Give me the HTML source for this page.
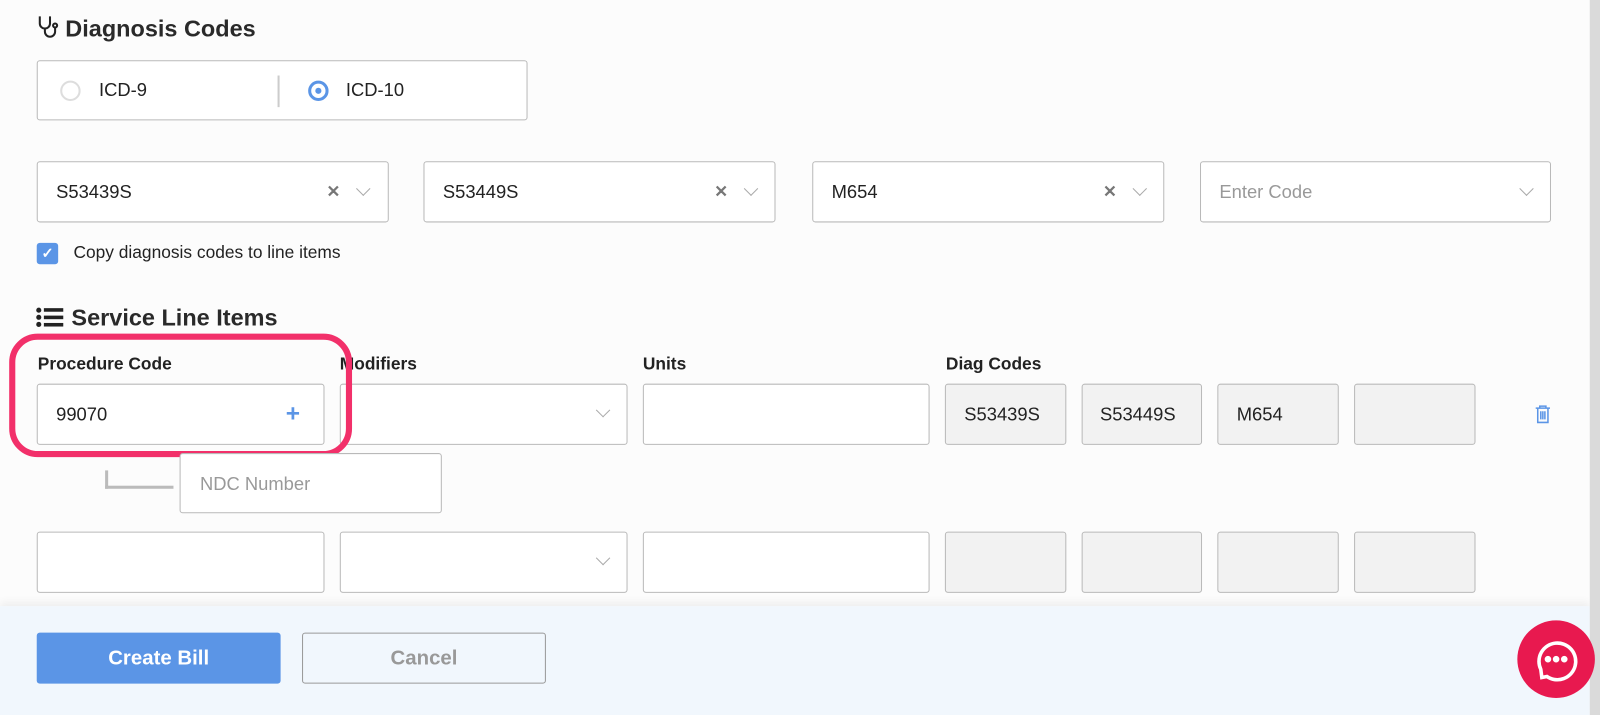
<!DOCTYPE html>
<html><head><style>
*{box-sizing:border-box;margin:0;padding:0}
body{width:1600px;height:701px;overflow:hidden;background:#fcfcfc;font-family:"Liberation Sans",sans-serif;color:#222;position:relative}
#w{position:absolute;left:0;top:0;width:1568px;height:687px;transform:scale(1.0204);transform-origin:0 0}
.a{position:absolute}
.box{position:absolute;border:1px solid #b9b9b9;border-radius:3px;background:#fff;height:60px}
.g{background:#f2f2f2}
.t{position:absolute;font-size:18px}
h2{position:absolute;font-size:23px;font-weight:bold;color:#2a2a2a}
.lbl{position:absolute;font-size:17px;font-weight:bold;color:#222}
.chev{position:absolute;width:10px;height:10px;border-right:1.5px solid #aaa;border-bottom:1.5px solid #aaa;transform:rotate(45deg)}
.x{position:absolute;font-size:16px;color:#777;font-weight:bold}
</style></head><body><div id="w">
<svg class="a" style="left:36px;top:14px" width="22" height="24" viewBox="0 0 22 24" fill="none" stroke="#222" stroke-width="2"><path d="M3 2v7a5 5 0 0 0 10 0V2M8 14v3a5 5 0 0 0 10 0v-4"/><circle cx="18" cy="11" r="2"/></svg>
<h2 style="left:64px;top:15px">Diagnosis Codes</h2>
<div class="box" style="left:36px;top:59px;width:481px;height:59px"></div>
<div class="a" style="left:272px;top:74px;width:2px;height:31px;background:#ccc"></div>
<div class="a" style="left:59px;top:79px;width:20px;height:20px;border:2px solid #ddd;border-radius:50%"></div>
<div class="t" style="left:97px;top:78px">ICD-9</div>
<div class="a" style="left:302px;top:79px;width:20px;height:20px;border:3px solid #5b95e6;border-radius:50%"><div class="a" style="left:4px;top:4px;width:6px;height:6px;background:#5b95e6;border-radius:50%"></div></div>
<div class="t" style="left:339px;top:78px">ICD-10</div>

<div class="box" style="left:36px;top:158px;width:345px"></div><div class="t" style="left:55px;top:178px">S53439S</div><div class="x" style="left:320px;top:178px">✕</div><div class="chev" style="left:351px;top:180px"></div>
<div class="box" style="left:415px;top:158px;width:345px"></div><div class="t" style="left:434px;top:178px">S53449S</div><div class="x" style="left:700px;top:178px">✕</div><div class="chev" style="left:731px;top:180px"></div>
<div class="box" style="left:796px;top:158px;width:345px"></div><div class="t" style="left:815px;top:178px">M654</div><div class="x" style="left:1081px;top:178px">✕</div><div class="chev" style="left:1112px;top:180px"></div>
<div class="box" style="left:1176px;top:158px;width:344px"></div><div class="t" style="left:1195px;top:178px;color:#999">Enter Code</div><div class="chev" style="left:1491px;top:180px"></div>

<div class="a" style="left:36px;top:238px;width:21px;height:21px;background:#5b95e6;border-radius:3px;color:#fff;font-size:14px;text-align:center;line-height:21px;font-weight:bold">✓</div>
<div class="t" style="left:72px;top:238px;font-size:17px">Copy diagnosis codes to line items</div>

<svg class="a" style="left:35px;top:301px" width="28" height="20" viewBox="0 0 28 20" fill="#222"><circle cx="3" cy="3" r="2.5"/><circle cx="3" cy="10" r="2.5"/><circle cx="3" cy="17" r="2.5"/><rect x="8" y="1" width="19" height="3.5"/><rect x="8" y="8.3" width="19" height="3.5"/><rect x="8" y="15.5" width="19" height="3.5"/></svg>
<h2 style="left:70px;top:298px">Service Line Items</h2>

<div class="lbl" style="left:37px;top:347px">Procedure Code</div>
<div class="lbl" style="left:333px;top:347px">Modifiers</div>
<div class="lbl" style="left:630px;top:347px">Units</div>
<div class="lbl" style="left:927px;top:347px">Diag Codes</div>

<div class="box" style="left:333px;top:376px;width:282px"></div><div class="chev" style="left:586px;top:397px"></div>
<div class="box" style="left:36px;top:376px;width:282px"></div><div class="t" style="left:55px;top:396px">99070</div>
<div class="a" style="left:280px;top:396px;color:#5b95e6;font-size:24px;font-weight:bold;line-height:20px">+</div>
<div class="a" style="left:9px;top:327px;width:336px;height:121px;border:6px solid #f2306a;border-radius:28px"></div>
<div class="box" style="left:630px;top:376px;width:281px"></div>
<div class="box g" style="left:926px;top:376px;width:119px"></div><div class="t" style="left:945px;top:396px;width:96px;overflow:hidden;white-space:nowrap">S53439S</div>
<div class="box g" style="left:1060px;top:376px;width:118px"></div><div class="t" style="left:1078px;top:396px;width:96px;overflow:hidden;white-space:nowrap">S53449S</div>
<div class="box g" style="left:1193px;top:376px;width:119px"></div><div class="t" style="left:1212px;top:396px">M654</div>
<div class="box g" style="left:1327px;top:376px;width:119px"></div>
<svg class="a" style="left:1504px;top:397px" width="16" height="18" viewBox="0 0 16 18" fill="none" stroke="#5b95e6" stroke-width="1.5"><path d="M1 3h14M5 3V1h6v2M3 3v14h10V3M6 6v8M8 6v8M10 6v8"/></svg>

<div class="a" style="left:103px;top:461px;width:3px;height:18px;background:#bbb"></div>
<div class="a" style="left:103px;top:476px;width:67px;height:3px;background:#bbb"></div>
<div class="box" style="left:176px;top:444px;width:257px;height:59px"></div><div class="t" style="left:196px;top:464px;color:#999">NDC Number</div>

<div class="box" style="left:36px;top:521px;width:282px"></div>
<div class="box" style="left:333px;top:521px;width:282px"></div><div class="chev" style="left:586px;top:542px"></div>
<div class="box" style="left:630px;top:521px;width:281px"></div>
<div class="box g" style="left:926px;top:521px;width:119px"></div>
<div class="box g" style="left:1060px;top:521px;width:118px"></div>
<div class="box g" style="left:1193px;top:521px;width:119px"></div>
<div class="box g" style="left:1327px;top:521px;width:119px"></div>

<div class="a" style="left:0;top:594px;width:1558px;height:107px;background:#f1f7fd;box-shadow:0 -4px 8px rgba(0,0,0,0.06)"></div>
<div class="a" style="left:36px;top:620px;width:239px;height:50px;background:#5b95e6;border-radius:3px;color:#fff;font-size:20px;font-weight:bold;text-align:center;line-height:50px">Create Bill</div>
<div class="a" style="left:296px;top:620px;width:239px;height:50px;border:1px solid #999;border-radius:3px;color:#999;font-size:20px;font-weight:bold;text-align:center;line-height:48px">Cancel</div>
<div class="a" style="left:1558px;top:0;width:10px;height:701px;background:#dadada"></div>
<div class="a" style="left:1487px;top:608px;width:76px;height:76px;background:#e8194f;border-radius:50%"></div>
<svg class="a" style="left:1501px;top:622px" width="48" height="48" viewBox="0 0 48 48" fill="none" stroke="#fff" stroke-width="3.5"><path d="M15 41 A18 18 0 1 0 9 34 L10 42 Z"/><circle cx="16" cy="24" r="1.5" fill="#fff"/><circle cx="24" cy="24" r="1.5" fill="#fff"/><circle cx="32" cy="24" r="1.5" fill="#fff"/></svg>
</div></body></html>
